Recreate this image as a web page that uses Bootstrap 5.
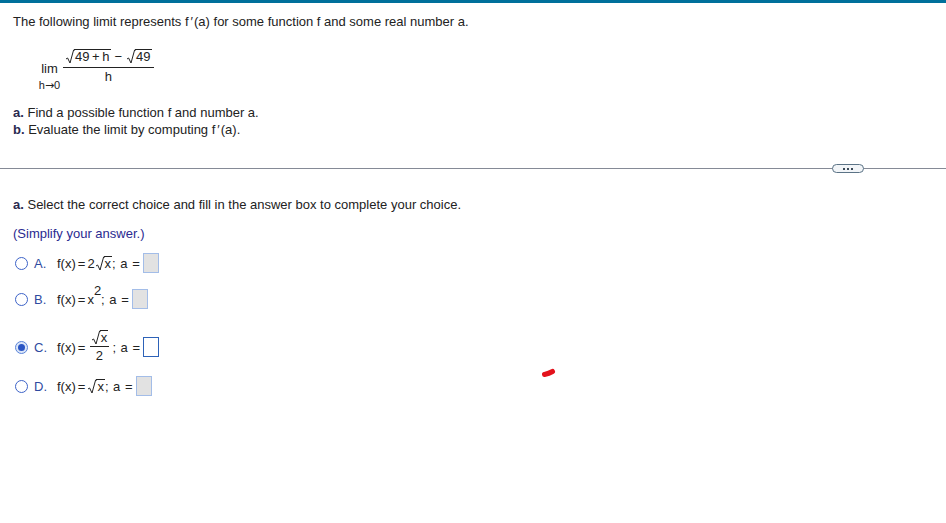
<!DOCTYPE html>
<html lang="en">
<head>
<meta charset="utf-8">
<title>Limit question</title>
<link rel="stylesheet" href="https://cdn.jsdelivr.net/npm/bootstrap@5.3.0/dist/css/bootstrap.min.css">
<style>
html,body{height:523px;overflow:hidden;}
body{background:#fff;color:#222;font-family:"Liberation Sans",Arial,sans-serif;font-size:13px;line-height:17px;}
.topbar{height:3px;background:#00709b;}
.question{padding:10px 13px 0;height:165px;}
.prm{margin:0 1px 0 2px;}
.limit{margin:19px 0 0 23px;height:55px;}
.limword{width:27px;text-align:center;margin-top:12px;line-height:15px;}
.limword small{display:block;font-size:11px;line-height:12px;margin-top:3px;white-space:nowrap;margin-left:-2px;margin-right:-2px;}
.limword small span{font-family:"DejaVu Sans",sans-serif;font-size:11px;}
.frac{display:inline-flex;flex-direction:column;align-items:center;}
.num{border-bottom:1px solid #222;height:19px;padding:0 2px 3px;white-space:nowrap;display:flex;align-items:flex-end;}
.num .minus{margin:0 4px;align-self:center;}
.den{line-height:17px;}
.rad{display:inline-flex;align-items:flex-end;}
.rad svg{display:block;width:10px;height:15px;margin-right:-1px;}
.rad b{font-weight:400;border-top:1px solid #222;line-height:14px;padding:0 1px;}
.tight{word-spacing:-1px;}
.parts{margin-top:0;}
.parts strong,.lead-in{color:#2a2a50;font-weight:700;}
.divider{height:1px;background:#858a96;position:relative;}
.morebtn{position:absolute;left:832px;top:-4px;width:32px;height:9px;border:1px solid #5b7386;border-radius:5px;background:#f2f5f8;display:flex;align-items:center;justify-content:center;gap:2px;}
.morebtn i{display:block;width:2px;height:2px;background:#3c4a58;}
.answer{padding:27px 13px 0;}
.hint{color:#2a2a90;margin-top:12px;}
.choice{display:flex;align-items:center;color:#222;white-space:nowrap;}
.c-a{margin-top:9px;height:24px;}
.c-b{margin-top:12px;height:24px;}
.c-c{margin-top:14px;height:44px;}
.c-d{margin-top:5px;height:24px;}
.radio{width:13px;height:13px;border-radius:50%;border:1px solid #3d63c8;flex:none;margin:0 6px 0 2px;display:flex;align-items:center;justify-content:center;background:#fff;}
.radio.on{background:#dbe6f8;border-color:#5b84d8;}
.radio.on span{width:7px;height:7px;border-radius:50%;background:#2a55c4;}
.letter{color:#2f4aa0;width:23px;flex:none;}
.ansbox{display:inline-block;width:16px;height:20px;background:#e2e2e2;border:1px solid #a3bde8;margin-left:3px;flex:none;}
.ansbox.live{background:#fff;border-color:#2d62b8;}
.sup{position:relative;top:-8px;line-height:0;}
.math{display:inline-flex;align-items:center;word-spacing:1px;}
.eq{margin:0 2px;}
.math .num{height:auto;padding:0 1px 1px;}
.math .frac{margin:0 2px 0 1px;width:22px;}
.mark-red{position:absolute;left:541px;top:368px;}
</style>
</head>
<body>
<div class="topbar"></div>
<section class="question">
  <div>The following limit represents f<span class="prm">&#8242;</span>(a) for some function f and some real number a.</div>
  <div class="limit d-flex align-items-start">
    <div class="limword">lim<small>h<span>&#8594;</span>0</small></div>
    <div class="frac">
      <div class="num"><span class="rad"><svg viewBox="0 0 10 15"><path d="M1 10l1.6-1 2.4 5L8.6 1H10" fill="none" stroke="#222" stroke-width="1"/></svg><b class="tight">49 + h</b></span><span class="minus">&#8722;</span><span class="rad"><svg viewBox="0 0 10 15"><path d="M1 10l1.6-1 2.4 5L8.6 1H10" fill="none" stroke="#222" stroke-width="1"/></svg><b>49</b></span></div>
      <div class="den">h</div>
    </div>
  </div>
  <div class="parts"><strong>a.</strong> Find a possible function f and number a.<br><strong>b.</strong> Evaluate the limit by computing f<span class="prm">&#8242;</span>(a).</div>
</section>
<div class="divider"><div class="morebtn"><i></i><i></i><i></i></div></div>
<section class="answer">
  <div><span class="lead-in">a.</span> Select the correct choice and fill in the answer box to complete your choice.</div>
  <div class="hint">(Simplify your answer.)</div>
  <div class="choice c-a"><span class="radio"></span><span class="letter">A.</span><span class="math">f(x)<span class="eq">=</span>2<span class="rad"><svg viewBox="0 0 10 15"><path d="M1 10l1.6-1 2.4 5L8.6 1H10" fill="none" stroke="#222" stroke-width="1"/></svg><b>x</b></span>; a =</span><span class="ansbox"></span></div>
  <div class="choice c-b"><span class="radio"></span><span class="letter">B.</span><span class="math">f(x)<span class="eq">=</span>x<span class="sup">2</span>; a =</span><span class="ansbox"></span></div>
  <div class="choice c-c"><span class="radio on"><span></span></span><span class="letter">C.</span><span class="math">f(x)<span class="eq">=</span><span class="frac"><span class="num"><span class="rad"><svg viewBox="0 0 10 15"><path d="M1 10l1.6-1 2.4 5L8.6 1H10" fill="none" stroke="#222" stroke-width="1"/></svg><b>x</b></span></span><span class="den">2</span></span>; a =</span><span class="ansbox live"></span></div>
  <div class="choice c-d"><span class="radio"></span><span class="letter">D.</span><span class="math">f(x)<span class="eq">=</span><span class="rad"><svg viewBox="0 0 10 15"><path d="M1 10l1.6-1 2.4 5L8.6 1H10" fill="none" stroke="#222" stroke-width="1"/></svg><b>x</b></span>; a =</span><span class="ansbox"></span></div>
</section>
<svg class="mark-red" width="15" height="10" viewBox="0 0 15 10"><path d="M3.5 6.5C6 6 9 5 11.5 3.5" stroke="#e3121c" stroke-width="5" stroke-linecap="round" fill="none"/></svg>
<script src="https://cdn.jsdelivr.net/npm/bootstrap@5.3.0/dist/js/bootstrap.bundle.min.js"></script>
</body>
</html>
